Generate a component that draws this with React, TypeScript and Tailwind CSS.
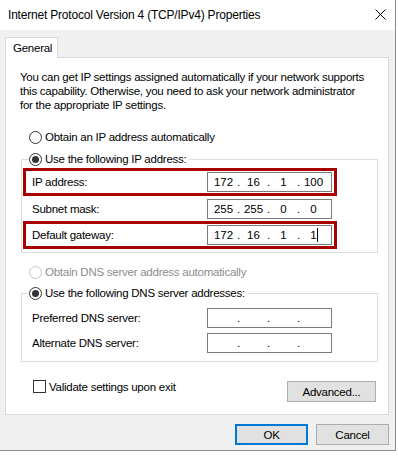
import React, { Fragment } from "react";

function Radio({ checked, disabled }: { checked?: boolean; disabled?: boolean }) {
  return (
    <span
      className={`inline-flex w-[13px] h-[13px] shrink-0 items-center justify-center rounded-full border bg-white ${
        disabled ? "border-[#c4c4c4]" : "border-[#333333]"
      }`}
    >
      {checked && <span className="block w-[7px] h-[7px] rounded-full bg-[#333333]" />}
    </span>
  );
}

function IpField({ parts, caret }: { parts: string[]; caret?: boolean }) {
  return (
    <div className="flex w-[125px] h-[20px] shrink-0 items-center border border-[#7a7a7a] bg-white pl-[4px] text-black tracking-normal">
      {parts.map((p, i) => (
        <Fragment key={i}>
          {i > 0 && <span className="w-[7px] text-center">.</span>}
          <span className="relative w-[23px] text-center">
            {p}
            {caret && i === 3 && (
              <span className="absolute left-[15px] top-[0px] h-[14px] w-px bg-black" />
            )}
          </span>
        </Fragment>
      ))}
    </div>
  );
}

function PlainRow({ label, parts }: { label: string; parts: string[] }) {
  return (
    <div className="flex items-center pl-[10px]">
      <span className="w-[175px]">{label}</span>
      <IpField parts={parts} />
    </div>
  );
}

function RedRow({ label, parts, caret }: { label: string; parts: string[]; caret?: boolean }) {
  return (
    <div className="ml-[1px] flex h-[28px] w-[314px] items-center border-[3px] border-[#a80000] pl-[6px]">
      <span className="w-[175px]">{label}</span>
      <IpField parts={parts} caret={caret} />
    </div>
  );
}

function Button({ children, primary, className = "" }: { children: React.ReactNode; primary?: boolean; className?: string }) {
  return (
    <div
      className={`flex h-[21px] items-center justify-center bg-[#e1e1e1] ${
        primary ? "border-2 border-[#0078d7]" : "border border-[#adadad]"
      } ${className}`}
    >
      {children}
    </div>
  );
}

export default function App() {
  return (
    <div className="h-[456px] w-[398px] bg-white font-['Liberation_Sans',Arial,sans-serif] text-[11.5px] leading-[14px] tracking-[-0.25px] text-black">
      <div className="flex h-[451px] w-[396px] flex-col border-b border-r border-[#8a8a8a]">
        {/* Title bar */}
        <div className="flex h-[30px] shrink-0 items-center justify-between bg-white pl-[8px] pr-[9px]">
          <span className="text-[12px] tracking-[-0.2px]">Internet Protocol Version 4 (TCP/IPv4) Properties</span>
          <svg width="11" height="11" viewBox="0 0 11 11" className="mt-[-1px]">
            <path d="M0.5 0.5 L10.5 10.5 M10.5 0.5 L0.5 10.5" stroke="#000" strokeWidth="1" fill="none" />
          </svg>
        </div>

        {/* Body */}
        <div className="flex flex-1 flex-col bg-[#f0f0f0] pl-[5px] pr-[6px] pt-[7px]">
          {/* Tab */}
          <div className="relative z-10 -mb-px flex h-[21px] w-[53px] items-center border border-b-0 border-[#d9d9d9] bg-white pl-[7px]">
            General
          </div>

          {/* Panel */}
          <div className="flex h-[358px] flex-col border border-[#d9d9d9] bg-white">
            <p className="ml-[14px] mt-[12px] whitespace-nowrap">
              You can get IP settings assigned automatically if your network supports
              <br />
              this capability. Otherwise, you need to ask your network administrator
              <br />
              for the appropriate IP settings.
            </p>

            <div className="ml-[23px] mt-[17px] flex h-[16px] items-center gap-[3px]">
              <Radio />
              <span>Obtain an IP address automatically</span>
            </div>

            <fieldset className="ml-[15px] mt-[6px] w-[357px] border border-[#dcdcdc] pb-[3px]">
              <legend className="ml-[7px] pr-[3px]">
                <span className="flex h-[16px] items-center gap-[3px] bg-white">
                  <Radio checked />
                  <span>Use the following IP address:</span>
                </span>
              </legend>
              <div className="mt-[1px] flex flex-col">
                <RedRow label="IP address:" parts={["172", "16", "1", "100"]} />
                <div className="mt-[3px]">
                  <PlainRow label="Subnet mask:" parts={["255", "255", "0", "0"]} />
                </div>
                <div className="mt-[2px]">
                  <RedRow label="Default gateway:" parts={["172", "16", "1", "1"]} caret />
                </div>
              </div>
            </fieldset>

            <div className="ml-[23px] mt-[11px] flex h-[16px] items-center gap-[3px] text-[#8c8c8c]">
              <Radio disabled />
              <span>Obtain DNS server address automatically</span>
            </div>

            <fieldset className="ml-[15px] mt-[5px] w-[357px] border border-[#dcdcdc] pb-[8px]">
              <legend className="ml-[7px] pr-[3px]">
                <span className="flex h-[16px] items-center gap-[3px] bg-white">
                  <Radio checked />
                  <span>Use the following DNS server addresses:</span>
                </span>
              </legend>
              <div className="mt-[7px] flex flex-col gap-[5px]">
                <PlainRow label="Preferred DNS server:" parts={["", "", "", ""]} />
                <PlainRow label="Alternate DNS server:" parts={["", "", "", ""]} />
              </div>
            </fieldset>

            <div className="mt-[18px] flex items-start justify-between pr-[12px]">
              <div className="ml-[27px] flex h-[13px] items-center gap-[3px]">
                <span className="block h-[13px] w-[13px] border border-[#333333] bg-white" />
                <span>Validate settings upon exit</span>
              </div>
              <Button className="mt-[1px] w-[89px]">Advanced...</Button>
            </div>
          </div>

          {/* Bottom buttons */}
          <div className="mt-[9px] flex justify-end gap-[8px]">
            <Button primary className="w-[73px]">OK</Button>
            <Button className="w-[73px]">Cancel</Button>
          </div>
        </div>
      </div>
    </div>
  );
}
